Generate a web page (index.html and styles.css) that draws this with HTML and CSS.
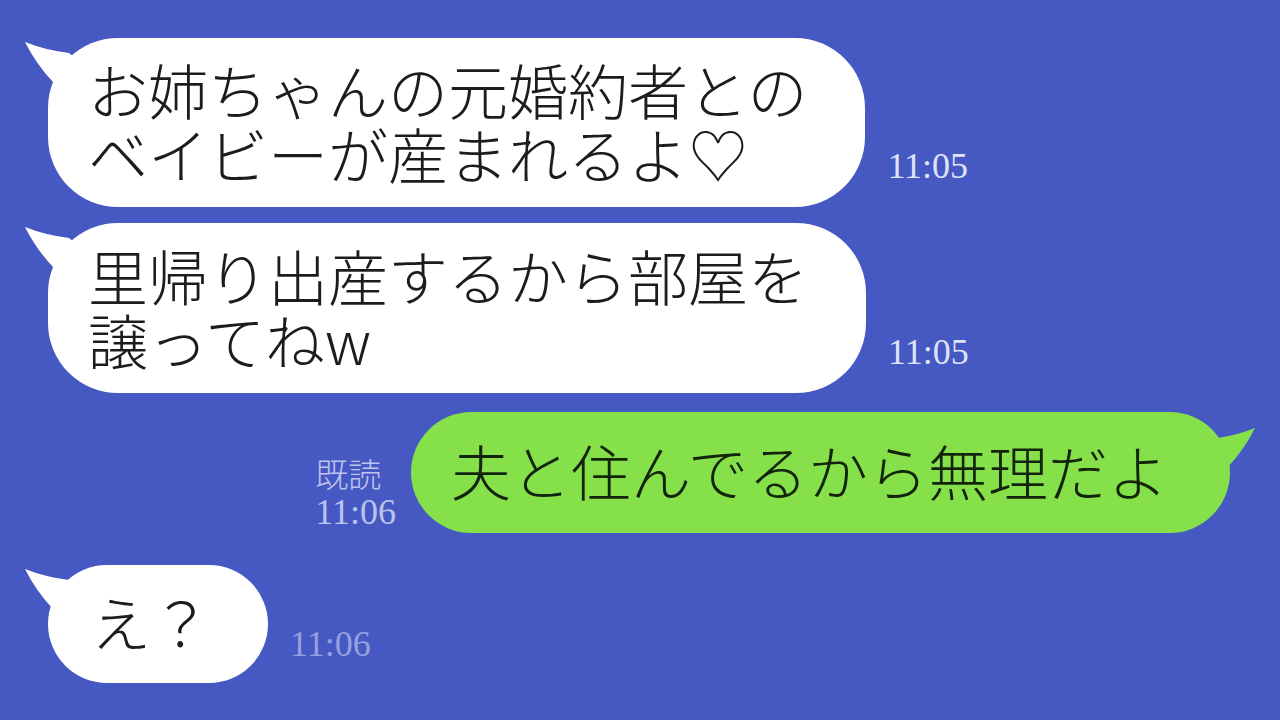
FILE: index.html
```html
<html>
<head>
<title>トーク</title>
<meta name="viewport" content="width=device-width, initial-scale=1">
<link rel="stylesheet" href="styles.css">
</head>
<body>
<div class="chat">

  <div class="row left first">
    <div class="bubble">
      <svg class="tail" viewBox="0 0 64 60" width="64" height="60"><path d="M1 4 Q21 12 45 15 L64 30 L64 60 L30 60 L29 44 Q12 26 1 4 Z"/></svg>
      お姉ちゃんの元婚約者との<br>ベイビーが産まれるよ♡
    </div>
    <div class="time">11:05</div>
  </div>

  <div class="row left second">
    <div class="bubble">
      <svg class="tail" viewBox="0 0 64 60" width="64" height="60"><path d="M1 4 Q21 12 45 15 L64 30 L64 60 L30 60 L29 44 Q12 26 1 4 Z"/></svg>
      里帰り出産するから部屋を<br>譲ってねw
    </div>
    <div class="time">11:05</div>
  </div>

  <div class="row right">
    <div class="read">
      <div class="read-label">既読</div>
      <div class="read-time">11:06</div>
    </div>
    <div class="bubble green">
      <svg class="tail" viewBox="0 0 64 60" width="64" height="60"><path d="M1 4 Q21 12 45 15 L64 30 L64 60 L30 60 L29 44 Q12 26 1 4 Z"/></svg>
      夫と住んでるから無理だよ
    </div>
  </div>

  <div class="row left last">
    <div class="bubble short">
      <svg class="tail" viewBox="0 0 64 60" width="64" height="60"><path d="M1 4 Q21 12 45 15 L64 30 L64 60 L30 60 L29 44 Q12 26 1 4 Z"/></svg>
      え？
    </div>
    <div class="time faint">11:06</div>
  </div>

</div>
</body>
</html>
```

FILE: styles.css
```css
body {
  margin: 0;
  height: 720px;
  overflow: hidden;
  background: #4658c1;
  font-family: "Noto Sans CJK JP", "Noto Sans", sans-serif;
}

.chat {
  display: flex;
  flex-direction: column;
  padding-top: 38px;
}

.row {
  display: flex;
  align-items: flex-end;
}

.row.left {
  padding-left: 48px;
}

.row.second {
  margin-top: 16px;
}

.row.right {
  justify-content: flex-end;
  padding-right: 50px;
  margin-top: 19px;
}

.row.last {
  margin-top: 32px;
}

.bubble {
  position: relative;
  background: #fff;
  color: #1c1c1c;
  border-radius: 70px;
  font-size: 60px;
  font-weight: 300;
  line-height: 64px;
  padding: 19px 58px 22px 40px;
  white-space: nowrap;
}

.row.second .bubble {
  padding-top: 20px;
}

.bubble .tail {
  position: absolute;
  left: -24px;
  top: 0;
  fill: #fff;
}

.bubble.green {
  background: #86e049;
  color: #13240c;
  padding: 26px 62px 31px 40px;
}

.bubble.green .tail {
  left: auto;
  right: -26px;
  top: 12px;
  fill: #86e049;
  transform: scaleX(-1);
}

.bubble.short {
  padding: 24px 57px 30px 43px;
}

.time {
  font-family: "Liberation Serif", serif;
  font-size: 36px;
  line-height: 36px;
  color: #dfe3f7;
  margin-left: 22px;
  margin-bottom: 23px;
}

.time.faint {
  color: #95a0de;
  margin-bottom: 21px;
}

.read {
  display: flex;
  flex-direction: column;
  margin-right: 15px;
  margin-bottom: 3px;
  color: #bcc3ee;
}

.read-label {
  font-size: 33px;
  font-weight: 300;
  line-height: 36px;
  margin-bottom: 3px;
}

.read-time {
  font-family: "Liberation Serif", serif;
  font-size: 36px;
  line-height: 36px;
}
```
